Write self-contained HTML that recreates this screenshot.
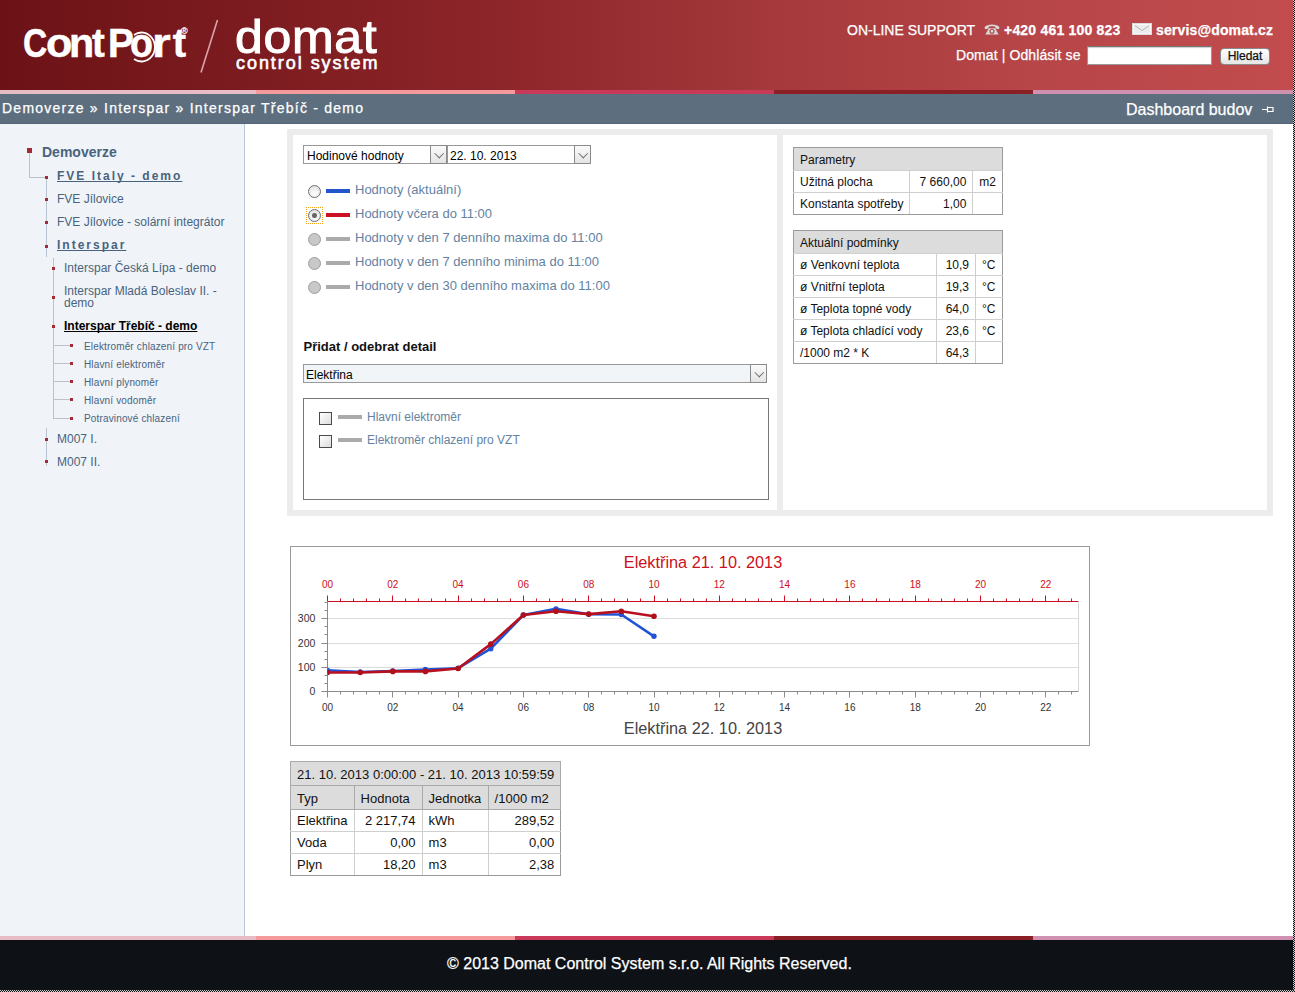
<!DOCTYPE html>
<html><head><meta charset="utf-8">
<style>
*{margin:0;padding:0;box-sizing:border-box}
html,body{width:1295px;height:992px;overflow:hidden;background:#fff;font-family:"Liberation Sans",sans-serif;position:relative}
.a{position:absolute;white-space:nowrap;line-height:1}
#hdr{left:0;top:0;width:1295px;height:90px;background:linear-gradient(90deg,#6c1216 0%,#8c2529 38%,#a5393b 60%,#b74648 80%,#c24c4e 100%)}
.strip{position:absolute;height:4px}
#bar{left:0;top:94px;width:1295px;height:30px;background:#5d6e7e;border-bottom:1px solid #55667a}
#side{left:0;top:124px;width:245px;height:812px;background:#f0f4f8;border-right:1px solid #b9c6d8}
#foot{left:0;top:940px;width:1295px;height:50px;background:#0e1116}
#dotr{left:1293px;top:0;width:2px;height:992px;background:repeating-conic-gradient(#111 0 25%,#d0d0d0 0 50%) 0 0/2px 2px}
#dotb{left:0;top:990px;width:1295px;height:2px;background:repeating-conic-gradient(#111 0 25%,#d0d0d0 0 50%) 0 0/2px 2px}
.w{color:#fff;-webkit-text-stroke:0.25px #fff}
.lg{top:23.1px;font-size:40px;font-weight:bold;transform-origin:0 0;-webkit-text-stroke:0.5px #fff}
/* sidebar */
.sq{position:absolute;width:3px;height:3px;background:#a52a35}
.vl{position:absolute;width:1px;background:#b9c3cf}
.hl{position:absolute;height:1px;background:#b9c3cf}
.t1{position:absolute;white-space:nowrap;line-height:1;font-size:12px;color:#49637e}
.sp{font-weight:bold;letter-spacing:2px;text-decoration:underline;text-underline-offset:0.5px;text-decoration-skip-ink:none}
.lf{position:absolute;white-space:nowrap;line-height:1;font-size:10px;letter-spacing:0.15px;color:#49637e}
.sel{position:absolute;border:1px solid #999;background:#fff}
.sel span{position:absolute;top:3.8px;font-size:12px;line-height:12px;color:#000;white-space:nowrap}
.sel i{position:absolute;top:-1px;width:17px;height:19px;border:1px solid #8a8a8a;background:linear-gradient(#fafafa,#e4e4e4)}
.sel i:after{content:"";position:absolute;left:4.5px;top:3.5px;width:5.5px;height:5.5px;border-right:1.3px solid #707070;border-bottom:1.3px solid #707070;transform:rotate(45deg)}
.rad{position:absolute;width:13px;height:13px;border-radius:50%;border:1.2px solid #6e6e6e;background:radial-gradient(circle at 50% 70%,#fff,#dcdcdc)}
.rad b{position:absolute;left:3.1px;top:3.1px;width:4.6px;height:4.6px;border-radius:50%;background:#666}
.rad.dis{background:#c8c8c8;border-color:#9c9c9c}
.ln{position:absolute;width:24px;height:4px}
.lab{position:absolute;white-space:nowrap;line-height:1;font-size:13px;color:#6482a2}
.cb{position:absolute;width:13px;height:13px;border:1px solid #4a4a4a;background:linear-gradient(135deg,#fff,#dcdcdc)}
.tb{position:absolute;border-collapse:collapse;font-size:12px;color:#111;border:1px solid #9a9a9a}
.tb td{border:1px solid #cfcfcf;height:22px;padding:0 6px;line-height:12px;white-space:nowrap}
.tb tr.hd td{background:#dcdcdc;height:23px;border-color:#cfcfcf}
.tb td.r{text-align:right}
.tb tr td:first-child{border-left-color:#9a9a9a}
.tb tr td:last-child{border-right-color:#9a9a9a}
.tb tr:first-child td{border-top-color:#9a9a9a}
.tb tr:last-child td{border-bottom-color:#9a9a9a}
.tb tr.hd td{padding-top:2px}
.sm{font-size:13px}
.sm tr.hd td{height:24px;border-color:#aaa}
</style></head><body>
<div id="hdr" class="a"></div>
<div class="strip" style="top:90px;left:0;width:256px;background:#e8bcc4"></div>
<div class="strip" style="top:90px;left:256px;width:259px;background:#f59a9c"></div>
<div class="strip" style="top:90px;left:515px;width:259px;background:#c93a5a"></div>
<div class="strip" style="top:90px;left:774px;width:259px;background:#8a1f26"></div>
<div class="strip" style="top:90px;left:1033px;width:262px;background:#d090b0"></div>

<!-- logo -->
<div class="a w lg" style="left:23.4px;transform:scaleX(0.84)">C</div>
<div class="a w lg" style="left:45.6px;transform:scaleX(1.08)">o</div>
<div class="a w lg" style="left:68.8px;transform:scaleX(1.03)">n</div>
<div class="a w lg" style="left:92.3px;transform:scaleX(0.96)">t</div>
<div class="a w lg" style="left:107.5px;transform:scaleX(0.97)">P</div>
<div class="a w lg" style="left:130.4px;transform:scaleX(0.94)">o</div>
<div class="a w lg" style="left:151.7px;transform:scaleX(1.2)">r</div>
<div class="a w lg" style="left:172.8px;transform:scaleX(1.0)">t</div>
<div class="a w" style="left:181px;top:26.5px;font-size:9px;">®</div>
<svg class="a" style="left:0;top:0" width="400" height="90">
 <line x1="201" y1="72.5" x2="217.5" y2="20" stroke="#d9a3ab" stroke-width="1.6"/>
 <path d="M134 34.9A13.5 14.5 0 1 1 134 59.1" fill="none" stroke="#fff" stroke-width="1.8"/>
</svg>
<div class="a w" style="left:235px;top:10.9px;font-size:50px;letter-spacing:0.7px;-webkit-text-stroke:1.1px #fff;transform:scaleY(0.93);transform-origin:0 42.3px">domat</div>
<div class="a w" style="left:236px;top:54px;font-size:18px;letter-spacing:1.95px;-webkit-text-stroke:0.6px #fff">control system</div>

<!-- header right -->
<div class="a w" style="left:847px;top:23px;font-size:14px">ON-LINE SUPPORT</div>
<svg class="a" style="left:984px;top:23px" width="16" height="12"><path d="M0.5 4.2C3 0.5 13 0.5 15.5 4.2L14.8 6.2L11.6 5.6L11.2 3.8C9 3.2 7 3.2 4.8 3.8L4.4 5.6L1.2 6.2Z" fill="#d8d8d8"/><path d="M4.8 5.2H11.2L14.6 11.5H1.4Z" fill="#d8d8d8"/><circle cx="8" cy="8.2" r="2" fill="none" stroke="#b04444" stroke-width="1.1"/></svg>
<div class="a w" style="left:1004px;top:23px;font-size:14px;font-weight:bold;letter-spacing:0.2px">+420 461 100 823</div>
<svg class="a" style="left:1132px;top:23px" width="20" height="12"><rect x="0.5" y="0.5" width="19" height="11" fill="#ececec" stroke="#dcdcdc"/><rect x="1.5" y="1.5" width="17" height="9" fill="none" stroke="#f8f8f8"/><polyline points="3,2.5 10,7.5 17,2.8" fill="none" stroke="#b5b5b5" stroke-width="1"/></svg>
<div class="a w" style="left:1156px;top:23px;font-size:14px;font-weight:bold;letter-spacing:0.15px">servis@domat.cz</div>
<div class="a w" style="left:956px;top:47.6px;font-size:14px;letter-spacing:0.1px">Domat | Odhlásit se</div>
<div class="a" style="left:1087px;top:46px;width:125px;height:19px;background:#fff;border:1px solid #9a9a9a;border-top-color:#777;box-shadow:inset 0 1px 1px rgba(0,0,0,.2)"></div>
<div class="a" style="left:1220px;top:47.5px;width:50px;height:17px;background:linear-gradient(#fff,#e6e6e6);border:1px solid #8a8a8a;border-radius:4px;font-size:12px;color:#111;text-align:center;line-height:15px;-webkit-text-stroke:0.25px #111">Hledat</div>

<!-- bar -->
<div id="bar" class="a"></div>
<div class="a w" style="left:2px;top:100.9px;font-size:14px;letter-spacing:1.24px">Demoverze » Interspar » Interspar Třebíč - demo</div>
<div class="a w" style="left:1126px;top:102px;font-size:16px">Dashboard budov</div>
<svg class="a" style="left:1262px;top:106px" width="12" height="8"><path d="M0 3.5H5M5.5 0.5V6.5M5.5 1.5H11V5.5H5.5" fill="none" stroke="#fff" stroke-width="1.2"/></svg>

<!-- sidebar -->
<div id="side" class="a"></div>
<div class="a" style="left:27px;top:148px;width:5px;height:5px;background:#a52a35"></div>
<div class="vl" style="left:29px;top:153px;height:25px"></div>
<div class="hl" style="left:29px;top:177px;width:17px"></div>
<div class="a" style="left:42px;top:145.1px;font-size:14px;font-weight:bold;color:#49637e">Demoverze</div>
<div class="vl" style="left:46px;top:179px;height:78px"></div>
<div class="sq" style="left:45px;top:176px"></div>
<div class="t1 sp" style="left:57px;top:169.8px">FVE Italy - demo</div>
<div class="sq" style="left:45px;top:198px"></div>
<div class="t1" style="left:57px;top:192.8px">FVE Jílovice</div>
<div class="sq" style="left:45px;top:221px"></div>
<div class="t1" style="left:57px;top:215.5px">FVE Jílovice - solární integrátor</div>
<div class="sq" style="left:45px;top:245px"></div>
<div class="t1 sp" style="left:57px;top:239px">Interspar</div>

<div class="vl" style="left:53px;top:258px;height:161px"></div>
<div class="sq" style="left:52px;top:267px"></div>
<div class="t1" style="left:64px;top:262px">Interspar Česká Lípa - demo</div>
<div class="sq" style="left:52px;top:296px"></div>
<div class="t1" style="left:64px;top:285.2px">Interspar Mladá Boleslav II. -</div>
<div class="t1" style="left:64px;top:297.2px">demo</div>
<div class="sq" style="left:52px;top:325px"></div>
<div class="t1" style="left:64px;top:319.7px;font-weight:bold;color:#000;text-decoration:underline;text-underline-offset:0.5px;text-decoration-skip-ink:none">Interspar Třebíč - demo</div>

<div class="hl" style="left:53px;top:345px;width:17px"></div>
<div class="sq" style="left:70px;top:344px"></div>
<div class="lf" style="left:84px;top:341.5px">Elektroměr chlazení pro VZT</div>
<div class="hl" style="left:53px;top:363px;width:17px"></div>
<div class="sq" style="left:70px;top:362px"></div>
<div class="lf" style="left:84px;top:360.3px">Hlavní elektroměr</div>
<div class="hl" style="left:53px;top:381px;width:17px"></div>
<div class="sq" style="left:70px;top:380px"></div>
<div class="lf" style="left:84px;top:378.1px">Hlavní plynoměr</div>
<div class="hl" style="left:53px;top:399px;width:17px"></div>
<div class="sq" style="left:70px;top:398px"></div>
<div class="lf" style="left:84px;top:395.9px">Hlavní vodoměr</div>
<div class="hl" style="left:53px;top:418px;width:17px"></div>
<div class="sq" style="left:70px;top:417px"></div>
<div class="lf" style="left:84px;top:414px">Potravinové chlazení</div>

<div class="vl" style="left:46px;top:428px;height:38px"></div>
<div class="sq" style="left:45px;top:438px"></div>
<div class="t1" style="left:57px;top:433.3px">M007 I.</div>
<div class="sq" style="left:45px;top:460px"></div>
<div class="t1" style="left:57px;top:456.3px">M007 II.</div>

<!-- MAIN -->
<div class="a" style="left:287px;top:129px;width:986px;height:387px;background:#ececec"></div>
<div class="a" style="left:293px;top:135px;width:484px;height:375px;background:#fff"></div>
<div class="a" style="left:783px;top:135px;width:484px;height:375px;background:#fff"></div>

<!-- selects -->
<div class="sel" style="left:303px;top:145px;width:145px;height:19px"><span style="left:3px">Hodinové hodnoty</span><i style="left:126px"></i></div>
<div class="sel" style="left:447px;top:145px;width:144px;height:19px"><span style="left:2px">22. 10. 2013</span><i style="left:126px"></i></div>

<!-- radios -->
<div class="rad" style="left:308px;top:185px"></div>
<div class="ln" style="left:326px;top:189px;background:#2255cc"></div>
<div class="lab" style="left:355px;top:183px">Hodnoty (aktuální)</div>
<div class="a" style="left:306px;top:207px;width:17px;height:17px;border:1px dotted #f2a71c"></div>
<div class="rad" style="left:308px;top:209px"><b></b></div>
<div class="ln" style="left:326px;top:213px;background:#cc1122"></div>
<div class="lab" style="left:355px;top:207px">Hodnoty včera do 11:00</div>
<div class="rad dis" style="left:308px;top:233px"></div>
<div class="ln" style="left:326px;top:237px;background:#aaa"></div>
<div class="lab" style="left:355px;top:231px">Hodnoty v den 7 denního maxima do 11:00</div>
<div class="rad dis" style="left:308px;top:257px"></div>
<div class="ln" style="left:326px;top:261px;background:#aaa"></div>
<div class="lab" style="left:355px;top:255px">Hodnoty v den 7 denního minima do 11:00</div>
<div class="rad dis" style="left:308px;top:281px"></div>
<div class="ln" style="left:326px;top:285px;background:#aaa"></div>
<div class="lab" style="left:355px;top:279px">Hodnoty v den 30 denního maxima do 11:00</div>

<div class="a" style="left:303.5px;top:339.9px;font-size:13px;font-weight:bold;color:#111">Přidat / odebrat detail</div>
<div class="sel" style="left:303px;top:364px;width:463px;height:19px;background:#f1f5f8"><span style="left:2px">Elektřina</span><i style="left:446px"></i></div>
<div class="a" style="left:303px;top:398px;width:466px;height:102px;border:1px solid #777"></div>
<div class="cb" style="left:319px;top:412px"></div>
<div class="ln" style="left:338px;top:415px;background:#aaa"></div>
<div class="lab" style="left:367px;top:410.5px;font-size:12px">Hlavní elektroměr</div>
<div class="cb" style="left:319px;top:435px"></div>
<div class="ln" style="left:338px;top:438px;background:#aaa"></div>
<div class="lab" style="left:367px;top:434.3px;font-size:12px">Elektroměr chlazení pro VZT</div>

<!-- right tables -->
<table class="tb" style="left:793px;top:147px;width:210px">
<tr class="hd"><td colspan="3">Parametry</td></tr>
<tr><td style="width:116px">Užitná plocha</td><td class="r" style="width:63px">7 660,00</td><td>m2</td></tr>
<tr><td>Konstanta spotřeby</td><td class="r">1,00</td><td></td></tr>
</table>
<table class="tb" style="left:793px;top:230px;width:210px">
<tr class="hd"><td colspan="3">Aktuální podmínky</td></tr>
<tr><td style="width:143px">ø Venkovní teplota</td><td class="r" style="width:39px">10,9</td><td>°C</td></tr>
<tr><td>ø Vnitřní teplota</td><td class="r">19,3</td><td>°C</td></tr>
<tr><td>ø Teplota topné vody</td><td class="r">64,0</td><td>°C</td></tr>
<tr><td>ø Teplota chladící vody</td><td class="r">23,6</td><td>°C</td></tr>
<tr><td>/1000 m2 * K</td><td class="r">64,3</td><td></td></tr>
</table>

<!-- CHART -->
<svg class="a" style="left:290px;top:546px" width="800" height="200" font-family="Liberation Sans">
<rect x="0.5" y="0.5" width="799" height="199" fill="#fff" stroke="#9a9a9a"/>
<line x1="37.5" x2="788.4" y1="121.5" y2="121.5" stroke="#dcdcdc"/>
<line x1="37.5" x2="788.4" y1="97.5" y2="97.5" stroke="#dcdcdc"/>
<line x1="37.5" x2="788.4" y1="72.5" y2="72.5" stroke="#dcdcdc"/>
<line x1="788.5" x2="788.5" y1="55.5" y2="145.5" stroke="#d6d6d6"/>
<path d="M37.5 55.5V49.5M50.5 55.5V52.5M63.5 55.5V52.5M76.5 55.5V52.5M89.5 55.5V52.5M102.5 55.5V49.5M115.5 55.5V52.5M128.5 55.5V52.5M141.5 55.5V52.5M155.5 55.5V52.5M168.5 55.5V49.5M181.5 55.5V52.5M194.5 55.5V52.5M207.5 55.5V52.5M220.5 55.5V52.5M233.5 55.5V49.5M246.5 55.5V52.5M259.5 55.5V52.5M272.5 55.5V52.5M285.5 55.5V52.5M298.5 55.5V49.5M311.5 55.5V52.5M324.5 55.5V52.5M337.5 55.5V52.5M350.5 55.5V52.5M364.5 55.5V49.5M377.5 55.5V52.5M390.5 55.5V52.5M403.5 55.5V52.5M416.5 55.5V52.5M429.5 55.5V49.5M442.5 55.5V52.5M455.5 55.5V52.5M468.5 55.5V52.5M481.5 55.5V52.5M494.5 55.5V49.5M507.5 55.5V52.5M520.5 55.5V52.5M533.5 55.5V52.5M546.5 55.5V52.5M559.5 55.5V49.5M572.5 55.5V52.5M586.5 55.5V52.5M599.5 55.5V52.5M612.5 55.5V52.5M625.5 55.5V49.5M638.5 55.5V52.5M651.5 55.5V52.5M664.5 55.5V52.5M677.5 55.5V52.5M690.5 55.5V49.5M703.5 55.5V52.5M716.5 55.5V52.5M729.5 55.5V52.5M742.5 55.5V52.5M755.5 55.5V49.5M768.5 55.5V52.5M781.5 55.5V52.5" stroke="#cc1020" stroke-width="1" fill="none"/>
<line x1="37.5" x2="788.4" y1="55.5" y2="55.5" stroke="#cc1020" stroke-width="1"/>
<path d="M37.5 145.5V151.5M50.5 145.5V148.5M63.5 145.5V148.5M76.5 145.5V148.5M89.5 145.5V148.5M102.5 145.5V151.5M115.5 145.5V148.5M128.5 145.5V148.5M141.5 145.5V148.5M155.5 145.5V148.5M168.5 145.5V151.5M181.5 145.5V148.5M194.5 145.5V148.5M207.5 145.5V148.5M220.5 145.5V148.5M233.5 145.5V151.5M246.5 145.5V148.5M259.5 145.5V148.5M272.5 145.5V148.5M285.5 145.5V148.5M298.5 145.5V151.5M311.5 145.5V148.5M324.5 145.5V148.5M337.5 145.5V148.5M350.5 145.5V148.5M364.5 145.5V151.5M377.5 145.5V148.5M390.5 145.5V148.5M403.5 145.5V148.5M416.5 145.5V148.5M429.5 145.5V151.5M442.5 145.5V148.5M455.5 145.5V148.5M468.5 145.5V148.5M481.5 145.5V148.5M494.5 145.5V151.5M507.5 145.5V148.5M520.5 145.5V148.5M533.5 145.5V148.5M546.5 145.5V148.5M559.5 145.5V151.5M572.5 145.5V148.5M586.5 145.5V148.5M599.5 145.5V148.5M612.5 145.5V148.5M625.5 145.5V151.5M638.5 145.5V148.5M651.5 145.5V148.5M664.5 145.5V148.5M677.5 145.5V148.5M690.5 145.5V151.5M703.5 145.5V148.5M716.5 145.5V148.5M729.5 145.5V148.5M742.5 145.5V148.5M755.5 145.5V151.5M768.5 145.5V148.5M781.5 145.5V148.5" stroke="#8a8a8a" stroke-width="1" fill="none"/>
<path d="M31.5 145.5H37.5M34.5 137.5H37.5M34.5 129.5H37.5M31.5 121.5H37.5M34.5 113.5H37.5M34.5 105.5H37.5M31.5 97.5H37.5M34.5 88.5H37.5M34.5 80.5H37.5M31.5 72.5H37.5M34.5 64.5H37.5M34.5 56.5H37.5" stroke="#8a8a8a" stroke-width="1" fill="none"/>
<line x1="37.5" x2="37.5" y1="55.5" y2="145.5" stroke="#8a8a8a"/>
<line x1="37.5" x2="788.4" y1="145.5" y2="145.5" stroke="#8a8a8a"/>
<text x="37.5" y="42" font-size="10" fill="#cc1020" text-anchor="middle">00</text>
<text x="37.5" y="164.6" font-size="10" fill="#333" text-anchor="middle">00</text>
<text x="102.8" y="42" font-size="10" fill="#cc1020" text-anchor="middle">02</text>
<text x="102.8" y="164.6" font-size="10" fill="#333" text-anchor="middle">02</text>
<text x="168.1" y="42" font-size="10" fill="#cc1020" text-anchor="middle">04</text>
<text x="168.1" y="164.6" font-size="10" fill="#333" text-anchor="middle">04</text>
<text x="233.4" y="42" font-size="10" fill="#cc1020" text-anchor="middle">06</text>
<text x="233.4" y="164.6" font-size="10" fill="#333" text-anchor="middle">06</text>
<text x="298.7" y="42" font-size="10" fill="#cc1020" text-anchor="middle">08</text>
<text x="298.7" y="164.6" font-size="10" fill="#333" text-anchor="middle">08</text>
<text x="364.0" y="42" font-size="10" fill="#cc1020" text-anchor="middle">10</text>
<text x="364.0" y="164.6" font-size="10" fill="#333" text-anchor="middle">10</text>
<text x="429.3" y="42" font-size="10" fill="#cc1020" text-anchor="middle">12</text>
<text x="429.3" y="164.6" font-size="10" fill="#333" text-anchor="middle">12</text>
<text x="494.6" y="42" font-size="10" fill="#cc1020" text-anchor="middle">14</text>
<text x="494.6" y="164.6" font-size="10" fill="#333" text-anchor="middle">14</text>
<text x="559.9" y="42" font-size="10" fill="#cc1020" text-anchor="middle">16</text>
<text x="559.9" y="164.6" font-size="10" fill="#333" text-anchor="middle">16</text>
<text x="625.2" y="42" font-size="10" fill="#cc1020" text-anchor="middle">18</text>
<text x="625.2" y="164.6" font-size="10" fill="#333" text-anchor="middle">18</text>
<text x="690.5" y="42" font-size="10" fill="#cc1020" text-anchor="middle">20</text>
<text x="690.5" y="164.6" font-size="10" fill="#333" text-anchor="middle">20</text>
<text x="755.8" y="42" font-size="10" fill="#cc1020" text-anchor="middle">22</text>
<text x="755.8" y="164.6" font-size="10" fill="#333" text-anchor="middle">22</text>
<text x="25.4" y="149.1" font-size="10.5" fill="#333" text-anchor="end">0</text>
<text x="25.4" y="124.8" font-size="10.5" fill="#333" text-anchor="end">100</text>
<text x="25.4" y="100.6" font-size="10.5" fill="#333" text-anchor="end">200</text>
<text x="25.4" y="76.3" font-size="10.5" fill="#333" text-anchor="end">300</text>
<text x="413" y="22.2" font-size="16.3" fill="#cc1020" text-anchor="middle">Elektřina 21. 10. 2013</text>
<text x="413" y="188" font-size="16.3" fill="#444" text-anchor="middle">Elektřina 22. 10. 2013</text>
<g clip-path="url(#cp)">
<defs><clipPath id="cp"><rect x="37.5" y="55.5" width="750.9499999999999" height="90.0"/></clipPath></defs>
<polyline points="37.5,124.4 70.2,126.0 102.8,125.0 135.4,123.5 168.1,122.2 200.8,102.7 233.4,69.0 266.0,62.9 298.7,68.3 331.3,68.5 364.0,90.3" fill="none" stroke="#2053d6" stroke-width="2.6" stroke-linejoin="round"/>
<circle cx="37.5" cy="124.4" r="2.7" fill="#2053d6"/>
<circle cx="70.2" cy="126.0" r="2.7" fill="#2053d6"/>
<circle cx="102.8" cy="125.0" r="2.7" fill="#2053d6"/>
<circle cx="135.4" cy="123.5" r="2.7" fill="#2053d6"/>
<circle cx="168.1" cy="122.2" r="2.7" fill="#2053d6"/>
<circle cx="200.8" cy="102.7" r="2.7" fill="#2053d6"/>
<circle cx="233.4" cy="69.0" r="2.7" fill="#2053d6"/>
<circle cx="266.0" cy="62.9" r="2.7" fill="#2053d6"/>
<circle cx="298.7" cy="68.3" r="2.7" fill="#2053d6"/>
<circle cx="331.3" cy="68.5" r="2.7" fill="#2053d6"/>
<circle cx="364.0" cy="90.3" r="2.7" fill="#2053d6"/>
<polyline points="37.5,126.5 70.2,126.5 102.8,125.4 135.4,125.4 168.1,122.5 200.8,98.1 233.4,69.0 266.0,65.3 298.7,68.1 331.3,65.3 364.0,70.3" fill="none" stroke="#b8101e" stroke-width="2.6" stroke-linejoin="round"/>
<circle cx="37.5" cy="126.5" r="2.8" fill="#b0101c"/>
<circle cx="70.2" cy="126.5" r="2.8" fill="#b0101c"/>
<circle cx="102.8" cy="125.4" r="2.8" fill="#b0101c"/>
<circle cx="135.4" cy="125.4" r="2.8" fill="#b0101c"/>
<circle cx="168.1" cy="122.5" r="2.8" fill="#b0101c"/>
<circle cx="200.8" cy="98.1" r="2.8" fill="#b0101c"/>
<circle cx="233.4" cy="69.0" r="2.8" fill="#b0101c"/>
<circle cx="266.0" cy="65.3" r="2.8" fill="#b0101c"/>
<circle cx="298.7" cy="68.1" r="2.8" fill="#b0101c"/>
<circle cx="331.3" cy="65.3" r="2.8" fill="#b0101c"/>
<circle cx="364.0" cy="70.3" r="2.8" fill="#b0101c"/>
</g>
</svg>

<!-- summary table -->
<table class="tb sm" style="left:290px;top:761px;width:271px">
<tr class="hd h1"><td colspan="4">21. 10. 2013 0:00:00 - 21. 10. 2013 10:59:59</td></tr>
<tr class="hd h2"><td style="width:61px">Typ</td><td style="width:68px">Hodnota</td><td style="width:66px">Jednotka</td><td>/1000 m2</td></tr>
<tr><td>Elektřina</td><td class="r">2 217,74</td><td>kWh</td><td class="r">289,52</td></tr>
<tr><td>Voda</td><td class="r">0,00</td><td>m3</td><td class="r">0,00</td></tr>
<tr><td>Plyn</td><td class="r">18,20</td><td>m3</td><td class="r">2,38</td></tr>
</table>

<!-- footer -->
<div class="strip" style="top:936px;left:0;width:256px;background:#e8bcc4"></div>
<div class="strip" style="top:936px;left:256px;width:259px;background:#f59a9c"></div>
<div class="strip" style="top:936px;left:515px;width:259px;background:#c93a5a"></div>
<div class="strip" style="top:936px;left:774px;width:259px;background:#8a1f26"></div>
<div class="strip" style="top:936px;left:1033px;width:262px;background:#d090b0"></div>
<div id="foot" class="a"></div>
<div class="a w" style="left:447px;top:956px;font-size:16px;">© 2013 Domat Control System s.r.o. All Rights Reserved.</div>
<div id="dotr" class="a"></div>
<div id="dotb" class="a"></div>
</body></html>
